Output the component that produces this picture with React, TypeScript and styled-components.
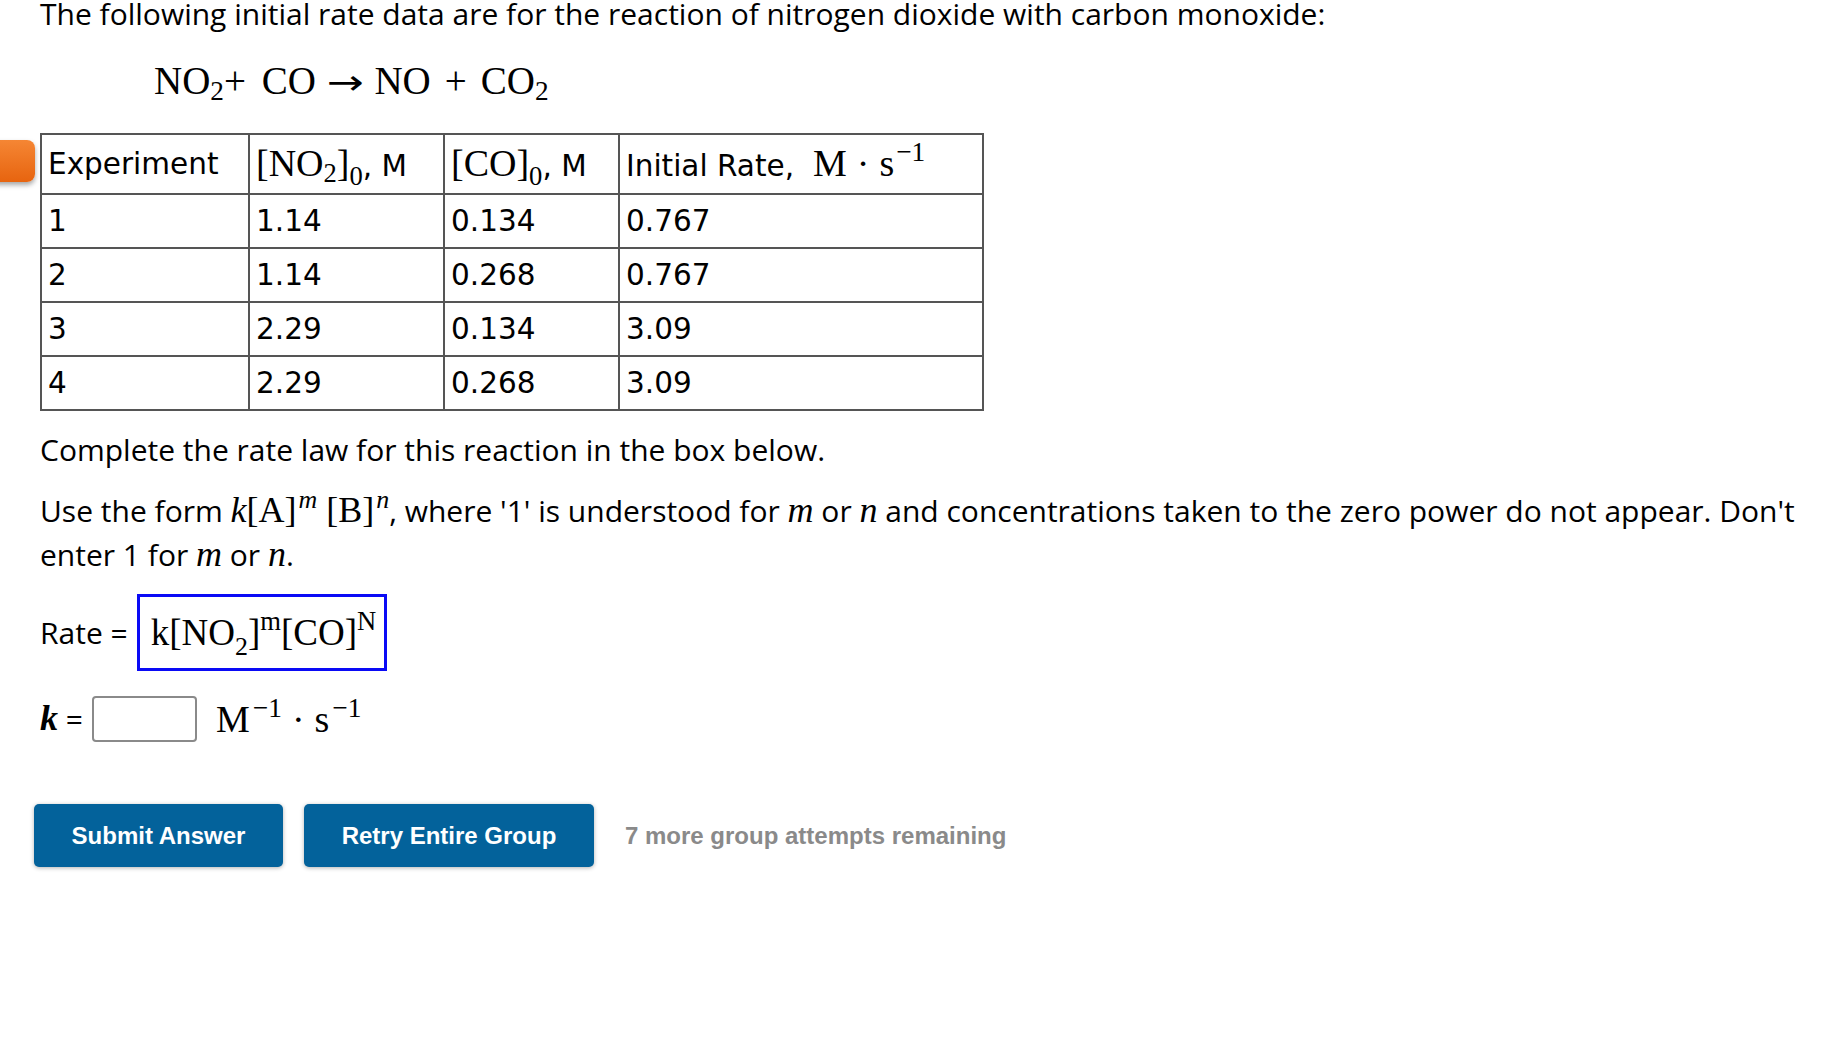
import styled, { createGlobalStyle } from 'styled-components';

const GlobalStyle = createGlobalStyle`
  html, body {
    margin: 0;
    padding: 0;
    background: #ffffff;
  }
  body {
    color: #000;
    font-family: "Open Sans", "Noto Sans", sans-serif;
  }
`;

const rows = [
  { exp: '1', no2: '1.14', co: '0.134', rate: '0.767' },
  { exp: '2', no2: '1.14', co: '0.268', rate: '0.767' },
  { exp: '3', no2: '2.29', co: '0.134', rate: '3.09' },
  { exp: '4', no2: '2.29', co: '0.268', rate: '3.09' },
];

const Page = styled.div`
  margin-top: -7px;
  padding: 0 20px 80px 40px;
  font-size: 30px;
  line-height: 44px;
`;

const Intro = styled.p`
  margin: 0;
  line-height: 42px;
`;

const Equation = styled.div`
  margin: 22px 0 0;
  padding-left: 114px;
  font-family: "Liberation Serif", "DejaVu Serif", serif;
  font-size: 39px;
  line-height: 48px;
`;

const Op = styled.span<{ $space: number }>`
  margin: 0 ${(p) => p.$space}px;
`;

const Arrow = styled.span`
  display: inline-block;
  margin: 0 15px;
  font-family: "DejaVu Sans", sans-serif;
  font-size: 34px;
  line-height: 1;
  transform: scaleX(1.3);
`;

const Math = styled.span<{ $size?: number }>`
  font-family: "Liberation Serif", "DejaVu Serif", serif;
  font-size: ${(p) => p.$size ?? 36}px;
  font-style: normal;
  line-height: 1;
`;

const Var = styled.i<{ $bold?: boolean }>`
  font-family: "Liberation Serif", "DejaVu Serif", serif;
  font-style: italic;
  font-weight: ${(p) => (p.$bold ? 700 : 400)};
  font-size: 36px;
  line-height: 1;
`;

const Dot = styled.span`
  margin: 0 10px;
`;

const Sub = styled.sub<{ $drop?: number }>`
  font-size: 0.7em;
  line-height: 0;
  vertical-align: ${(p) => p.$drop ?? -0.22}em;
`;

const Sup = styled.sup<{ $gap?: number }>`
  font-size: 0.72em;
  line-height: 0;
  vertical-align: 0.55em;
  margin-left: ${(p) => p.$gap ?? 0}px;
`;

const TableWrap = styled.div`
  position: relative;
  margin-top: 28px;
  width: 942px;
`;

const Flag = styled.div`
  position: absolute;
  left: -50px;
  top: 7px;
  width: 45px;
  height: 42px;
  border-radius: 8px;
  background: linear-gradient(#f58634, #e7640f);
  box-shadow: 0 3px 5px rgba(0, 0, 0, 0.35);
`;

const RateTable = styled.table`
  width: 942px;
  table-layout: fixed;
  border-collapse: collapse;
  border: 2px solid #555;
  font-family: "DejaVu Sans", Verdana, sans-serif;
  font-size: 29.5px;
  line-height: 36px;
`;

const HeadRow = styled.tr`
  height: 60px;
`;

const BodyRow = styled.tr`
  height: 54px;
`;

const Cell = styled.td`
  border: 2px solid #555;
  padding: 0 6px;
  text-align: left;
  vertical-align: middle;
  white-space: nowrap;
  font-weight: 400;
`;

const Prompt = styled.p`
  margin: 17px 0 0;
`;

const AnswerRow = styled.div<{ $gap: number }>`
  display: flex;
  align-items: center;
  margin-top: ${(p) => p.$gap}px;
`;

const Label = styled.span`
  margin-right: 9px;
`;

const RateBox = styled.div`
  box-sizing: border-box;
  width: 250px;
  height: 77px;
  border: 3px solid #0a0af5;
  padding: 0 0 0 11px;
  display: flex;
  align-items: center;
  font-family: "Liberation Serif", "DejaVu Serif", serif;
  font-size: 37px;
  line-height: 1;
  white-space: nowrap;
`;

const KInput = styled.div`
  box-sizing: border-box;
  width: 105px;
  height: 46px;
  border: 2px solid #8a8a8a;
  border-radius: 4px;
  margin-right: 19px;
`;

const Actions = styled.div`
  display: flex;
  align-items: center;
  gap: 21px;
  margin: 62px 0 0 -6px;
`;

const Button = styled.button<{ $w: number }>`
  width: ${(p) => p.$w}px;
  height: 63px;
  border: none;
  border-radius: 5px;
  background: #03629b;
  color: #fff;
  font-family: "Liberation Sans", Arial, sans-serif;
  font-weight: 700;
  font-size: 24px;
  box-shadow: 0 1px 4px rgba(0, 0, 0, 0.3);
  cursor: pointer;
`;

const Remaining = styled.span`
  margin-left: 10px;
  color: #8a8a8a;
  font-family: "Liberation Sans", Arial, sans-serif;
  font-weight: 700;
  font-size: 24px;
`;

export default function App() {
  return (
    <>
      <GlobalStyle />
      <Page>
        <Intro>The following initial rate data are for the reaction of nitrogen dioxide with carbon monoxide:</Intro>
        <Equation>
          NO<Sub>2</Sub>+<Op $space={3}> </Op>CO<Arrow>→</Arrow>NO<Op $space={14}>+</Op>CO<Sub>2</Sub>
        </Equation>

        <TableWrap>
          <Flag />
          <RateTable>
            <colgroup>
              <col style={{ width: 208 }} />
              <col style={{ width: 195 }} />
              <col style={{ width: 175 }} />
              <col style={{ width: 364 }} />
            </colgroup>
            <thead>
              <HeadRow>
                <Cell as="th">Experiment</Cell>
                <Cell as="th">
                  <Math $size={38}>
                    [NO<Sub>2</Sub>]<Sub $drop={-0.35}>0</Sub>
                  </Math>
                  , M
                </Cell>
                <Cell as="th">
                  <Math $size={38}>
                    [CO]<Sub $drop={-0.35}>0</Sub>
                  </Math>
                  , M
                </Cell>
                <Cell as="th">
                  Initial Rate,{' '}
                  <Math $size={38}>
                    &nbsp;M<Dot>·</Dot>s<Sup $gap={2}>−1</Sup>
                  </Math>
                </Cell>
              </HeadRow>
            </thead>
            <tbody>
              {rows.map((r) => (
                <BodyRow key={r.exp}>
                  <Cell>{r.exp}</Cell>
                  <Cell>{r.no2}</Cell>
                  <Cell>{r.co}</Cell>
                  <Cell>{r.rate}</Cell>
                </BodyRow>
              ))}
            </tbody>
          </RateTable>
        </TableWrap>

        <Prompt>Complete the rate law for this reaction in the box below.</Prompt>
        <Prompt>
          Use the form <Var>k</Var>
          <Math>
            [A]<Sup $gap={2}><i>m</i></Sup> [B]<Sup $gap={2}><i>n</i></Sup>
          </Math>
          , where '1' is understood for <Var>m</Var> or <Var>n</Var> and concentrations taken to the zero power do not
          appear. Don't enter 1 for <Var>m</Var> or <Var>n</Var>.
        </Prompt>

        <AnswerRow $gap={17}>
          <Label>Rate =</Label>
          <RateBox>
            <span>
              k[NO<Sub $drop={-0.4}>2</Sub>]<Sup>m</Sup>[CO]<Sup>N</Sup>
            </span>
          </RateBox>
        </AnswerRow>

        <AnswerRow $gap={25}>
          <Label>
            <Var $bold>k</Var> =
          </Label>
          <KInput />
          <Math $size={38}>
            M<Sup $gap={3}>−1</Sup>
            <Dot>·</Dot>s<Sup $gap={3}>−1</Sup>
          </Math>
        </AnswerRow>

        <Actions>
          <Button $w={249}>Submit Answer</Button>
          <Button $w={290}>Retry Entire Group</Button>
          <Remaining>7 more group attempts remaining</Remaining>
        </Actions>
      </Page>
    </>
  );
}
